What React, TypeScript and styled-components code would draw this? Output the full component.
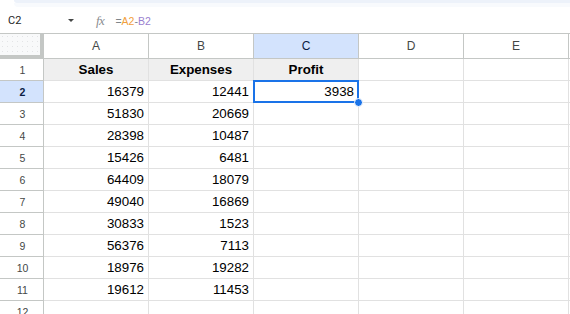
import React from "react";
import styled, { createGlobalStyle } from "styled-components";

const GlobalStyle = createGlobalStyle`
  html, body { margin: 0; padding: 0; background: #ffffff; }
  body { font-family: "Liberation Sans", Arial, sans-serif; overflow: hidden; }
`;

const Page = styled.div`
  width: 570px;
  height: 314px;
  overflow: hidden;
  background: #fff;
`;

const TopBand = styled.div`
  height: 8px;
  display: flex;
  flex-direction: column;
  padding-left: 14px;
  background: #fff;
`;

const BandStrip = styled.div<{ $h: number; $c: string }>`
  height: ${(p) => p.$h}px;
  background: ${(p) => p.$c};
  border-bottom-left-radius: 6px;
`;

const FormulaBar = styled.div`
  height: 25px;
  display: flex;
  align-items: center;
  border-bottom: 1px solid #c4c7c5;
  font-family: Roboto, "Liberation Sans", sans-serif;
`;

const NameBox = styled.div`
  width: 58px;
  padding-left: 8px;
  font-size: 11px;
  color: #1f1f1f;
`;

const Caret = styled.div`
  width: 0;
  height: 0;
  margin-left: 2px;
  border-left: 3px solid transparent;
  border-right: 3px solid transparent;
  border-top: 3px solid #444746;
`;

const Fx = styled.span`
  margin-left: 22px;
  font-family: "Liberation Serif", serif;
  font-style: italic;
  font-size: 13px;
  color: #8a8d91;
  letter-spacing: -0.5px;
`;

const Formula = styled.span`
  margin-left: 11px;
  font-family: "Liberation Sans", Arial, sans-serif;
  font-size: 10.5px;
  color: #80868b;
`;

const Ref = styled.span<{ $c: string }>`
  color: ${(p) => p.$c};
`;

const Grid = styled.div`
  display: grid;
  grid-template-columns: 44px repeat(5, 105px) 1fr;
  grid-auto-rows: 22px;
  grid-template-rows: 25px;
`;

const Corner = styled.div`
  box-sizing: border-box;
  background-color: #f8f9fa;
  background-image: radial-gradient(#e3e4e6 0.6px, transparent 0.8px);
  background-size: 5px 5px;
  border-right: 4px solid #c4c7c5;
  border-bottom: 4px solid #c4c7c5;
`;

const ColHead = styled.div<{ $sel?: boolean }>`
  box-sizing: border-box;
  display: flex;
  align-items: center;
  justify-content: center;
  font-size: 12px;
  color: ${(p) => (p.$sel ? "#0b1d44" : "#444746")};
  background: ${(p) => (p.$sel ? "#d3e3fd" : "#fff")};
  border-right: 1px solid #c4c7c5;
  border-bottom: 1px solid #c4c7c5;
`;

const Filler = styled.div`
  box-sizing: border-box;
  border-bottom: 1px solid #c4c7c5;
`;

const RowHead = styled.div<{ $sel?: boolean }>`
  box-sizing: border-box;
  display: flex;
  align-items: center;
  justify-content: center;
  padding-left: 2px;
  font-size: 10.5px;
  font-weight: ${(p) => (p.$sel ? 700 : 400)};
  color: ${(p) => (p.$sel ? "#0b1d44" : "#444746")};
  background: ${(p) => (p.$sel ? "#d3e3fd" : "#fff")};
  border-right: 1px solid #c4c7c5;
  border-bottom: 1px solid #c4c7c5;
`;

const Cell = styled.div<{ $head?: boolean }>`
  position: relative;
  box-sizing: border-box;
  display: flex;
  align-items: center;
  justify-content: ${(p) => (p.$head ? "center" : "flex-end")};
  padding: 0 4px 1px 4px;
  font-size: 13.33px;
  font-weight: ${(p) => (p.$head ? 700 : 400)};
  color: #000;
  background: ${(p) => (p.$head ? "#efefef" : "#fff")};
  border-right: 1px solid #e1e1e1;
  border-bottom: 1px solid #e1e1e1;
`;

const EmptyEdge = styled.div`
  box-sizing: border-box;
  border-bottom: 1px solid #e1e1e1;
`;

const Selection = styled.div`
  position: absolute;
  left: -1px;
  top: -1px;
  right: -1px;
  bottom: -1px;
  border: 2px solid #1a73e8;
  pointer-events: none;
`;

const Handle = styled.div`
  position: absolute;
  right: -5px;
  bottom: -5px;
  width: 7px;
  height: 7px;
  border-radius: 50%;
  background: #1a73e8;
  border: 1px solid #fff;
  z-index: 2;
`;

const data: [number, number][] = [
  [16379, 12441],
  [51830, 20669],
  [28398, 10487],
  [15426, 6481],
  [64409, 18079],
  [49040, 16869],
  [30833, 1523],
  [56376, 7113],
  [18976, 19282],
  [19612, 11453],
];

const cols = ["A", "B", "C", "D", "E"];

export default function App() {
  return (
    <Page>
      <GlobalStyle />
      <TopBand>
        <BandStrip $h={3} $c="#edf2fa" />
        <BandStrip $h={4} $c="#f8fafd" />
      </TopBand>
      <FormulaBar>
        <NameBox>C2</NameBox>
        <Caret />
        <Fx>fx</Fx>
        <Formula>
          =<Ref $c="#f2a03c">A2</Ref>-<Ref $c="#9a7fcf">B2</Ref>
        </Formula>
      </FormulaBar>
      <Grid>
        <Corner />
        {cols.map((c) => (
          <ColHead key={c} $sel={c === "C"}>
            {c}
          </ColHead>
        ))}
        <Filler />

        <RowHead>1</RowHead>
        <Cell $head>Sales</Cell>
        <Cell $head>Expenses</Cell>
        <Cell $head>Profit</Cell>
        <Cell />
        <Cell />
        <EmptyEdge />

        {data.map(([s, e], i) => (
          <React.Fragment key={i}>
            <RowHead $sel={i === 0}>{i + 2}</RowHead>
            <Cell>{s}</Cell>
            <Cell>{e}</Cell>
            <Cell>
              {i === 0 ? "3938" : ""}
              {i === 0 && (
                <>
                  <Selection />
                  <Handle />
                </>
              )}
            </Cell>
            <Cell />
            <Cell />
            <EmptyEdge />
          </React.Fragment>
        ))}

        <RowHead>12</RowHead>
        <Cell />
        <Cell />
        <Cell />
        <Cell />
        <Cell />
        <EmptyEdge />
      </Grid>
    </Page>
  );
}
